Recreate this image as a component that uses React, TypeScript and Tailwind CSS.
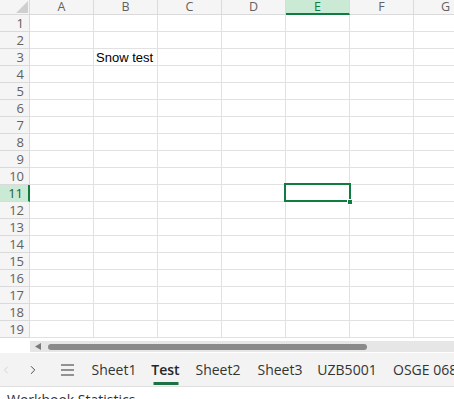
import { ChevronLeft, ChevronRight } from "lucide-react";

const cols = ["A", "B", "C", "D", "E", "F", "G"];
const rows = Array.from({ length: 19 }, (_, i) => i + 1);
const tabs = [
  { name: "Sheet1", w: "w-[58px]" },
  { name: "Test", w: "w-[45px]", active: true },
  { name: "Sheet2", w: "w-[60px]" },
  { name: "Sheet3", w: "w-[64px]" },
  { name: "UZB5001", w: "w-[70px]" },
  { name: "OSGE 068", w: "w-[90px]" },
];

function HeaderRow() {
  return (
    <div className="flex h-[15px]">
      <div className="w-[30px] shrink-0 bg-[#f5f5f5] border-r border-b border-[#dadada] relative">
        <svg className="absolute right-[1px] bottom-[1px]" width="12" height="12" viewBox="0 0 12 12">
          <polygon points="12,0 12,12 0,12" fill="#cfcfcf" />
        </svg>
      </div>
      {cols.map((c) => {
        const sel = c === "E";
        return (
          <div
            key={c}
            className={
              sel
                ? "w-[64px] shrink-0 flex items-center justify-center bg-[#caead6] text-[#107c41] border-r border-[#dadada] border-b-2 border-b-[#107c41] text-[12.5px] leading-[14px]"
                : "w-[64px] shrink-0 flex items-center justify-center bg-[#f5f5f5] text-[#616161] border-r border-b border-[#dadada] text-[12.5px] leading-[14px]"
            }
          >
            {c}
          </div>
        );
      })}
    </div>
  );
}

function Row({ n }: { n: number }) {
  const sel = n === 11;
  return (
    <div className="flex h-[17px]">
      <div
        className={
          sel
            ? "w-[30px] shrink-0 flex items-center justify-end pr-[5px] bg-[#caead6] text-[#1b5e3b] border-b border-[#dadada] border-r-2 border-r-[#107c41] text-[13px] leading-[15px]"
            : "w-[30px] shrink-0 flex items-center justify-end pr-[5px] bg-[#f5f5f5] text-[#616161] border-r border-b border-[#dadada] text-[13px] leading-[15px]"
        }
      >
        {n}
      </div>
      {cols.map((c) => (
        <div
          key={c}
          className="w-[64px] shrink-0 border-r border-b border-[#e1e1e1] relative"
        >
          {n === 3 && c === "B" && (
            <span className="absolute left-[2px] bottom-[0px] whitespace-nowrap font-['Liberation_Sans',Arial,sans-serif] text-[13px] leading-[15px] text-black">
              Snow test
            </span>
          )}
        </div>
      ))}
    </div>
  );
}

export default function App() {
  return (
    <div className="w-[454px] h-[399px] overflow-hidden bg-white font-['Open_Sans','Noto_Sans',sans-serif]">
      <div className="relative">
        <HeaderRow />
        {rows.map((n) => (
          <Row key={n} n={n} />
        ))}
        {/* active cell */}
        <div className="absolute left-[284px] top-[183px] w-[67px] h-[19px] border-2 border-[#107c41]" />
        <div className="absolute left-[347px] top-[199px] w-[6px] h-[6px] bg-[#107c41] border border-white" />
      </div>

      {/* horizontal scrollbar */}
      <div className="flex h-[15px] pt-[3px]">
        <div className="w-[30px] shrink-0" />
        <div className="flex-1 h-[11px] bg-[#e6e6e6] flex items-center">
          <svg className="ml-[5px] shrink-0" width="6" height="7" viewBox="0 0 6 7">
            <polygon points="6,0 6,7 0,3.5" fill="#7a7a7a" />
          </svg>
          <div className="ml-[7px] w-[319px] h-[6px] shrink-0 rounded-full bg-[#8a8a8a]" />
        </div>
      </div>

      {/* sheet tabs */}
      <div className="flex items-stretch h-[34px] overflow-hidden bg-[#f3f3f3] border-b border-[#e0e0e0]">
        <div className="w-[12px] shrink-0 flex items-center justify-center text-[#c8c8c8]">
          <ChevronLeft size={14} strokeWidth={1.5} />
        </div>
        <div className="w-[42px] shrink-0 flex items-center justify-center text-[#333]">
          <ChevronRight size={14} strokeWidth={1.5} />
        </div>
        <div className="w-[26px] shrink-0 flex items-center justify-center">
          <svg width="13" height="12" viewBox="0 0 13 12">
            <path d="M0 1h13M0 6h13M0 11h13" stroke="#333" strokeWidth="1.2" />
          </svg>
        </div>
        <div className="w-[5px] shrink-0" />
        {tabs.map((t, i) => (
          <div
            key={t.name}
            className={`${t.w} shrink-0 relative flex items-center text-[14px] whitespace-nowrap ${
              i === tabs.length - 1 ? "justify-start pl-[11px]" : "justify-center"
            } ${t.active ? "font-semibold text-[13px] text-[#262626]" : "text-[#333]"}`}
          >
            {t.name}
            {t.active && (
              <div className="absolute bottom-[1px] left-1/2 -translate-x-1/2 w-[25px] h-[3px] bg-[#1e7145]" />
            )}
          </div>
        ))}
      </div>

      <div className="px-[7px] pt-[2px] text-[14px] text-[#333] whitespace-nowrap">
        Workbook Statistics
      </div>
    </div>
  );
}
